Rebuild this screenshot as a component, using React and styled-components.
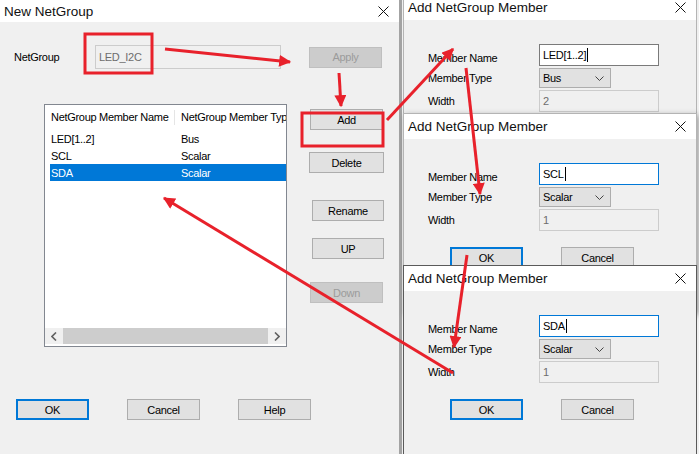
import styled, { createGlobalStyle } from "styled-components";

const GlobalStyle = createGlobalStyle`
  html, body {
    margin: 0;
    padding: 0;
    overflow: hidden;
  }
  body {
    font-family: "Liberation Sans", Arial, sans-serif;
    font-size: 11px;
    letter-spacing: -0.3px;
    color: #000;
  }
`

const Desktop = styled.div`
  position: relative;
  width: 699px;
  height: 454px;
  overflow: hidden;
  background: #f0f0f0;
`

// windows sit on the desktop, so they are placed by coordinates
const Window = styled.div`
  position: absolute;
  left: ${p => p.$left}px;
  top: ${p => p.$top}px;
  width: ${p => p.$width}px;
  height: ${p => p.$height}px;
  display: flex;
  flex-direction: column;
  background: #f0f0f0;
  box-sizing: border-box;
  border: 1px solid ${p => (p.$active ? "#5a5a5a" : "#b4b4b4")};
  box-shadow: ${p => (p.$shadow ? "2px 2px 6px rgba(0,0,0,0.35)" : "none")};
`

const MainWindow = styled(Window)`
  border: none;
  border-right: 3px solid #a3a3a3;
  box-sizing: content-box;
`

const TitleBar = styled.div`
  height: ${p => p.$h || 24}px;
  flex: none;
  background: #fff;
  display: flex;
  align-items: center;
  justify-content: space-between;
  padding: 0 10px 0 4px;
`

const Title = styled.span`
  font-size: 13.5px;
  letter-spacing: 0;
  color: #111;
`

const CloseIcon = () => (
  <svg width="11" height="11" viewBox="0 0 11 11">
    <path d="M0.5 0.5 L10.5 10.5 M10.5 0.5 L0.5 10.5" stroke="#111" strokeWidth="1" />
  </svg>
)

const MainBody = styled.div`
  flex: 1;
  display: flex;
  flex-direction: column;
`

const TopRow = styled.div`
  display: flex;
  align-items: center;
  padding: 23px 0 0 14px;
`

const Label = styled.span`
  width: ${p => p.$w}px;
  flex: none;
  padding-top: ${p => p.$dy || 0}px;
`

const Field = styled.div`
  box-sizing: border-box;
  width: ${p => p.$w}px;
  height: ${p => p.$h || 22}px;
  display: flex;
  align-items: center;
  padding-left: 3px;
  background: ${p => (p.$disabled ? "#f0f0f0" : "#fff")};
  color: ${p => (p.$disabled ? "#6d6d6d" : "#000")};
  border: 1px solid ${p => (p.$disabled ? "#cccccc" : p.$focus ? "#0078d7" : "#7a7a7a")};
`

const Caret = styled.span`
  display: inline-block;
  width: 1px;
  height: 14px;
  margin-left: 1px;
  background: #000;
`

const Button = styled.div`
  box-sizing: border-box;
  width: ${p => p.$w || 73}px;
  height: ${p => p.$h || 21}px;
  margin-left: ${p => p.$ml || 0}px;
  margin-top: ${p => p.$mt || 0}px;
  display: flex;
  align-items: center;
  justify-content: center;
  background: ${p => (p.$disabled ? "#cccccc" : "#e1e1e1")};
  color: ${p => (p.$disabled ? "#9b9b9b" : "#000")};
  border: ${p => (p.$default ? "2px solid #0078d7" : `1px solid ${p.$disabled ? "#bfbfbf" : "#adadad"}`)};
`

const Middle = styled.div`
  display: flex;
  align-items: flex-start;
  margin-top: 35px;
`

const ListView = styled.div`
  box-sizing: border-box;
  margin-left: 44px;
  width: 243px;
  height: 243px;
  background: #fff;
  border: 1px solid #828790;
  display: flex;
  flex-direction: column;
  overflow: hidden;
`

const HeaderRow = styled.div`
  display: flex;
  height: 25px;
  align-items: center;
  white-space: nowrap;
`

const HeaderCell = styled.div`
  width: ${p => p.$w}px;
  flex: none;
  padding-left: 6px;
  box-sizing: border-box;
  height: 15px;
  line-height: 15px;
  overflow: hidden;
  border-right: ${p => (p.$divider ? "1px solid #e5e5e5" : "none")};
`

const Row = styled.div`
  display: flex;
  height: 17px;
  align-items: center;
  margin: 0 0 0 5px;
  background: ${p => (p.$selected ? "#0078d7" : "transparent")};
  color: ${p => (p.$selected ? "#fff" : "#000")};
`

const Cell = styled.div`
  width: ${p => p.$w}px;
  padding-left: 1px;
  flex: none;
`

const Spacer = styled.div`
  flex: 1;
`

const HScroll = styled.div`
  height: 16px;
  margin: 0 0 2px 0;
  display: flex;
  align-items: stretch;
  background: #f0f0f0;
  color: #606060;
`

const ScrollArrow = styled.div`
  width: 18px;
  display: flex;
  align-items: center;
  justify-content: center;
`

const Thumb = styled.div`
  flex: 1;
  background: #cdcdcd;
`

const ButtonColumn = styled.div`
  display: flex;
  flex-direction: column;
  margin-left: 23px;
`

const BottomRow = styled.div`
  display: flex;
  gap: 38px;
  padding-left: 16px;
  margin-top: 52px;
`

const MemberBody = styled.div`
  padding: 24px 0 0 24px;
  display: grid;
  grid-template-columns: 111px auto;
  grid-template-rows: 22px 20px 22px;
  row-gap: 2px;
  align-items: center;
`

const MemberButtons = styled.div`
  display: flex;
  gap: 38px;
  padding: 16px 0 0 46px;
`

const Select = styled.div`
  box-sizing: border-box;
  width: 72px;
  height: 20px;
  display: flex;
  align-items: center;
  justify-content: space-between;
  padding: 0 6px 0 3px;
  background: #e1e1e1;
  border: 1px solid #adadad;
`

const Chevron = () => (
  <svg width="9" height="5" viewBox="0 0 9 5">
    <path d="M0.5 0.5 L4.5 4.5 L8.5 0.5" fill="none" stroke="#444" strokeWidth="1" />
  </svg>
)

const Overlay = styled.svg`
  position: absolute;
  left: 0;
  top: 0;
  pointer-events: none;
`

const arrows = [
  [165, 49, 290, 62],
  [339, 73, 341, 106],
  [387, 120, 453, 49],
  [466, 68, 480, 194],
  [467, 255, 454, 347],
  [453, 373, 164, 198],
]

const Annotations = () => (
  <Overlay width="699" height="454" viewBox="0 0 699 454">
    <defs>
      <marker id="head" viewBox="0 0 10 10" refX="9" refY="5" markerWidth="4.2" markerHeight="4" orient="auto">
        <path d="M0 0 L10 5 L0 10 z" fill="#e8212b" />
      </marker>
    </defs>
    <rect x="85" y="34" width="67" height="39" fill="none" stroke="#e8212b" strokeWidth="3" />
    <rect x="302" y="113" width="81" height="33" fill="none" stroke="#e8212b" strokeWidth="3" />
    {arrows.map(([x1, y1, x2, y2], i) => (
      <line key={i} x1={x1} y1={y1} x2={x2} y2={y2} stroke="#e8212b" strokeWidth="3" markerEnd="url(#head)" />
    ))}
  </Overlay>
)

const members = [
  { name: "LED[1..2]", type: "Bus" },
  { name: "SCL", type: "Scalar" },
  { name: "SDA", type: "Scalar", selected: true },
]

const MemberDialog = ({ top, name, type, width, focus, active, shadow }) => (
  <Window $left={403} $top={top} $width={294} $height={200} $active={active} $shadow={shadow}>
    <TitleBar $h={25}>
      <Title>Add NetGroup Member</Title>
      <CloseIcon />
    </TitleBar>
    <MemberBody>
      <Label $dy={5}>Member Name</Label>
      <Field $w={120} $focus={focus}>{name}<Caret /></Field>
      <Label>Member Type</Label>
      <Select>{type}<Chevron /></Select>
      <Label>Width</Label>
      <Field $w={120} $disabled>{width}</Field>
    </MemberBody>
    <MemberButtons>
      <Button $default>OK</Button>
      <Button>Cancel</Button>
    </MemberButtons>
  </Window>
)

const App = () => {
  return (
    <>
      <GlobalStyle />
      <Desktop>
        <MainWindow $left={0} $top={0} $width={399} $height={454}>
          <TitleBar $h={22}>
            <Title>New NetGroup</Title>
            <CloseIcon />
          </TitleBar>
          <MainBody>
            <TopRow>
              <Label $w={81}>NetGroup</Label>
              <Field $w={186} $h={24} $disabled>LED_I2C</Field>
              <Button $disabled $ml={28}>Apply</Button>
            </TopRow>
            <Middle>
              <ListView>
                <HeaderRow>
                  <HeaderCell $w={130} $divider>NetGroup Member Name</HeaderCell>
                  <HeaderCell $w={111}>NetGroup Member Type</HeaderCell>
                </HeaderRow>
                {members.map(m => (
                  <Row key={m.name} $selected={m.selected}>
                    <Cell $w={129}>{m.name}</Cell>
                    <Cell $w={106}>{m.type}</Cell>
                  </Row>
                ))}
                <Spacer />
                <HScroll>
                  <ScrollArrow>
                    <svg width="6" height="9" viewBox="0 0 6 9"><path d="M5 0.5 L1 4.5 L5 8.5" fill="none" stroke="#606060" strokeWidth="1.6" /></svg>
                  </ScrollArrow>
                  <Thumb />
                  <ScrollArrow>
                    <svg width="6" height="9" viewBox="0 0 6 9"><path d="M1 0.5 L5 4.5 L1 8.5" fill="none" stroke="#606060" strokeWidth="1.6" /></svg>
                  </ScrollArrow>
                </HScroll>
              </ListView>
              <ButtonColumn>
                <Button $mt={5}>Add</Button>
                <Button $mt={22} $ml={-1} $w={75}>Delete</Button>
                <Button $mt={27} $ml={2} $w={72}>Rename</Button>
                <Button $mt={17} $ml={2} $w={72}>UP</Button>
                <Button $mt={23} $disabled>Down</Button>
              </ButtonColumn>
            </Middle>
            <BottomRow>
              <Button $default>OK</Button>
              <Button>Cancel</Button>
              <Button>Help</Button>
            </BottomRow>
          </MainBody>
        </MainWindow>
        <MemberDialog top={-6} name="LED[1..2]" type="Bus" width="2" />
        <MemberDialog top={113} name="SCL" type="Scalar" width="1" focus shadow />
        <MemberDialog top={265} name="SDA" type="Scalar" width="1" focus active />
        <Annotations />
      </Desktop>
    </>
  )
}

export default App
